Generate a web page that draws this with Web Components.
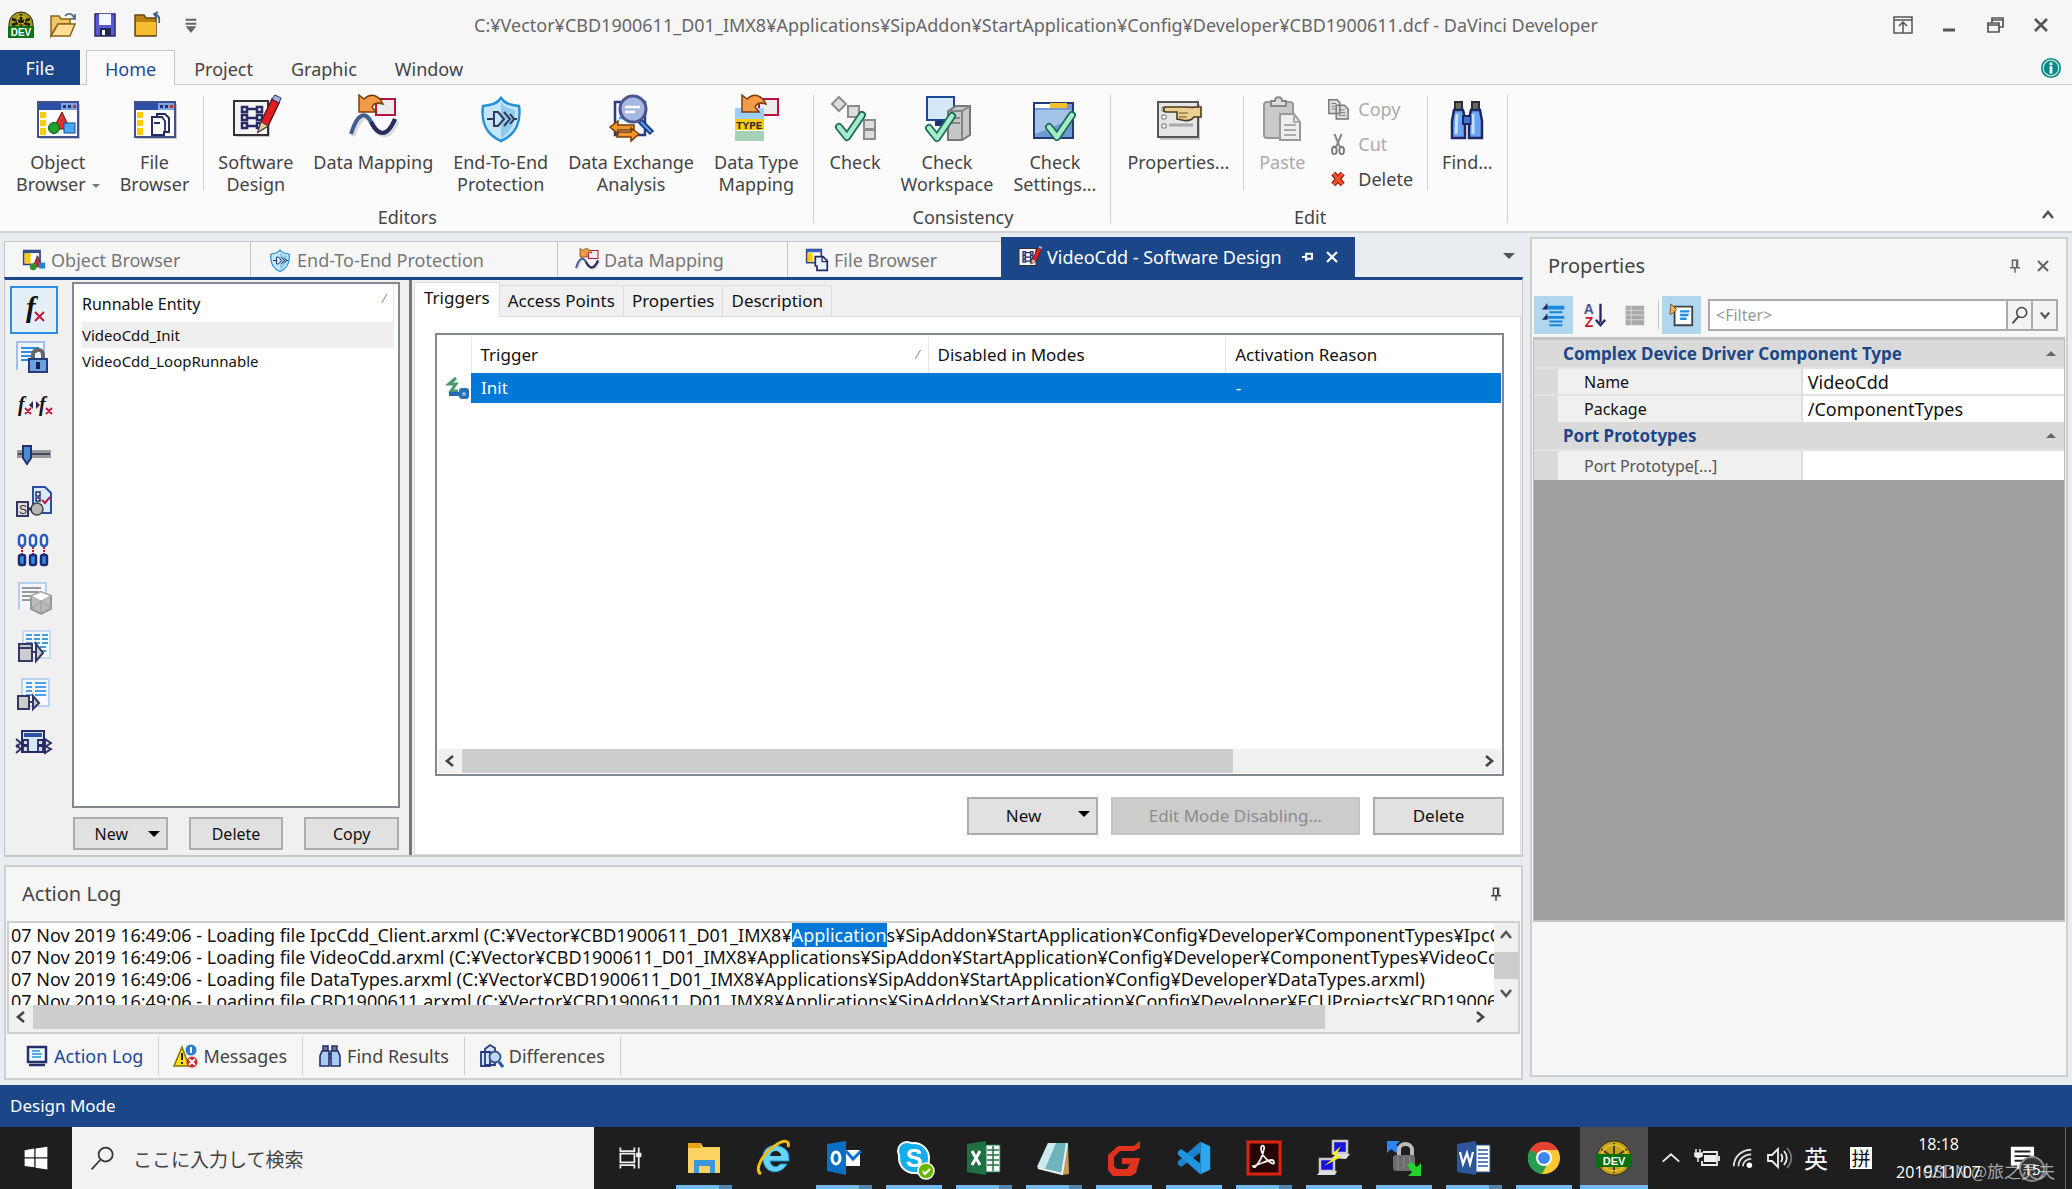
<!DOCTYPE html>
<html lang="en">
<head>
<meta charset="utf-8">
<title>DaVinci Developer</title>
<style>
    html, body {
        margin: 0;
        height: 100%;
    }
    body {
        font-family: "Noto Sans", "Open Sans", "Noto Sans CJK JP", sans-serif;
        font-size: 18px;
        line-height: 22px;
        color: #444;
        overflow: hidden;
    }
</style>
</head>
<body>
<app-window>
    <title-bar slot="top">C:¥Vector¥CBD1900611_D01_IMX8¥Applications¥SipAddon¥StartApplication¥Config¥Developer¥CBD1900611.dcf - DaVinci Developer</title-bar>
    <ribbon-tabs slot="top"></ribbon-tabs>
    <ribbon-bar slot="top">
        <ribbon-group label="Editors">
            <ribbon-button icon="objectBrowser" menu>Object<br>Browser</ribbon-button>
            <ribbon-button icon="fileBrowser">File<br>Browser</ribbon-button>
            <ribbon-separator></ribbon-separator>
            <ribbon-button icon="softwareDesign">Software<br>Design</ribbon-button>
            <ribbon-button icon="dataMapping">Data Mapping</ribbon-button>
            <ribbon-button icon="shield">End-To-End<br>Protection</ribbon-button>
            <ribbon-button icon="exchange">Data Exchange<br>Analysis</ribbon-button>
            <ribbon-button icon="typeMapping">Data Type<br>Mapping</ribbon-button>
        </ribbon-group>
        <ribbon-group label="Consistency">
            <ribbon-button icon="check">Check</ribbon-button>
            <ribbon-button icon="checkWorkspace">Check<br>Workspace</ribbon-button>
            <ribbon-button icon="checkSettings">Check<br>Settings...</ribbon-button>
        </ribbon-group>
        <ribbon-group label="Edit">
            <ribbon-button icon="properties">Properties...</ribbon-button>
            <ribbon-separator></ribbon-separator>
            <ribbon-button icon="paste" disabled>Paste</ribbon-button>
            <ribbon-stack>
                <small-button icon="copy" disabled>Copy</small-button>
                <small-button icon="cut" disabled>Cut</small-button>
                <small-button icon="delete">Delete</small-button>
            </ribbon-stack>
            <ribbon-separator></ribbon-separator>
            <ribbon-button icon="binoculars">Find...</ribbon-button>
        </ribbon-group>
    </ribbon-bar>
    <document-area slot="main">
        <document-tab slot="tabs" icon="objectSmall" style="flex-basis:246px">Object Browser</document-tab>
        <document-tab slot="tabs" icon="shield" style="flex-basis:307px">End-To-End Protection</document-tab>
        <document-tab slot="tabs" icon="dataMapping" style="flex-basis:230px">Data Mapping</document-tab>
        <document-tab slot="tabs" icon="fileSmall" style="flex-basis:214px">File Browser</document-tab>
        <document-tab slot="tabs" icon="softwareDesign" active style="flex-basis:354px">VideoCdd - Software Design</document-tab>
        <tool-strip></tool-strip>
        <entity-list></entity-list>
        <trigger-panel></trigger-panel>
    </document-area>
    <log-panel slot="main"></log-panel>
    <properties-panel slot="side"></properties-panel>
    <status-bar slot="bottom">Design Mode</status-bar>
    <task-bar slot="bottom"></task-bar>
</app-window>

<script>
const tick = (x, y) => `<path d="M${x} ${y + 14}l8 10 15-22" fill="none" stroke="#1c6b5a" stroke-width="8" stroke-linecap="round" stroke-linejoin="round"/><path d="M${x} ${y + 14}l8 10 15-22" fill="none" stroke="#a5ecc8" stroke-width="4.5" stroke-linecap="round" stroke-linejoin="round"/>`;
const windowFrame = `
    <rect x="6" y="10" width="40" height="35" fill="#0003"/>
    <rect x="4" y="8" width="40" height="35" fill="#fff" stroke="#41508f" stroke-width="2"/>
    <rect x="5" y="9" width="38" height="7" fill="#7ba4e0"/><rect x="5" y="9" width="22" height="7" fill="#2a4fa5"/>
    <path d="M29 11h3v3h-3zM34 11h3v3h-3z" fill="#28306e"/><path d="M39 11h3v3h-3z" fill="#d12a2a"/>
    <path d="M6 18h6v6H6zM6 26h6v6H6zM6 34h6v7H6z" fill="#ffcc00"/>`;
const arrowBack = (x, y) => `<path d="M${x} ${y}l5 4c6-6 14-5 19 5-6-2-9-1-11 3l4 5H${x}z" fill="#f29a45" stroke="#7c3f0c" stroke-width="1.5"/>`;
const ports = `<path d="M3 5h5v5H3zM3 13h5v5H3zM3 21h5v5H3zM18 5h5v5h-5zM18 13h5v5h-5zM18 21h5v5h-5zM8 7h10M8 16h10M8 24h10" fill="none" stroke="#272b66" stroke-width="2.5"/>`;

// [viewBox size, markup]
const ICONS = {
    objectBrowser: [48, `${windowFrame}<path d="M28 18l8 17H19z" fill="#d8342c" stroke="#6e1717"/><circle cx="20" cy="34" r="5.5" fill="#20a22b" stroke="#0d5c14"/><rect x="30" y="29" width="11" height="10" fill="#4aa8f5" stroke="#134a91"/>`],
    fileBrowser: [48, `${windowFrame}<path d="M21 23h5v-3h8l4 4v14h-5v3H21z" fill="#fff" stroke="#272b66" stroke-width="2"/><path d="M26 23h5l3 4v11M26 20v3M23 29h6" fill="none" stroke="#272b66" stroke-width="1.8"/>`],
    softwareDesign: [48, `<rect x="4" y="9" width="34" height="34" fill="#0003"/><rect x="2" y="7" width="34" height="34" fill="#f5f5f5" stroke="#333" stroke-width="2"/><g transform="translate(7 8)">${ports}</g><path d="M26 38l3-10 11-23 7 4-11 23z" fill="#e02020" stroke="#66131a" stroke-width="1.5"/><path d="M40 5l3-4 6 3-2 5z" fill="#a9b0dc" stroke="#272b66"/><path d="M26 38l3-10 7 4z" fill="#e8cfa0" stroke="#444"/>`],
    dataMapping: [48, `<rect x="27" y="5" width="19" height="16" fill="#ececec" stroke="#b8123f" stroke-width="2"/>${arrowBack(10, 1)}<path d="M2 40C8 20 16 16 22 28s15 18 24-3" fill="none" stroke="#0002" stroke-width="5" transform="translate(2 2)"/><path d="M2 40C8 20 16 16 22 28s15 18 24-3" fill="none" stroke="#3f5d91" stroke-width="4"/><path d="M22 28c6 12 15 18 24-3" fill="none" stroke="#292c5d" stroke-width="4"/>`],
    shield: [48, `<path d="M24 4c4 6 10 7 18 8 2 14-2 28-18 35C8 40 4 26 6 12c8-1 14-2 18-8z" fill="#c4e5fb" stroke="#2490d4" stroke-width="2.5"/><path d="M24 8c3 5 9 7 14 8 1 11-3 21-14 28z" fill="#91caef"/><path d="M10 25h7M17 18v14h4l6-7-6-7zM27 18l6 7-6 7M33 20l4 5-4 5M36 25h4" fill="none" stroke="#333a58" stroke-width="2"/>`],
    exchange: [48, `<path d="M8 8h30v33H8z" fill="#f1f8ff" stroke="#293a80" stroke-width="2.5"/><path d="M12 14h8M12 19h6M12 24h8" stroke="#3aa2ee" stroke-width="2.5"/><path d="M33 27l12 12" stroke="#183c8d" stroke-width="6"/><path d="M34 28l10 10" stroke="#5fa1ed" stroke-width="2"/><circle cx="26" cy="15" r="13" fill="#a6b8e4" stroke="#4b568c" stroke-width="3"/><path d="M18 13h15M18 18h10" stroke="#fff" stroke-width="2.5"/><path d="M3 33l8-6v4h16v5H11v4zM32 40l-8-6v4H10v5h14v4z" fill="#ef962e" stroke="#7b3e08" stroke-width="1.5"/>`],
    typeMapping: [48, `<rect x="27" y="5" width="19" height="16" fill="#ececec" stroke="#b8123f" stroke-width="2"/><path d="M3 14h29v11H3z" fill="#9cceff"/><path d="M3 25h29v11H3z" fill="#ffcb12"/><path d="M3 37h29v10H3z" fill="#a5d1b8"/>${arrowBack(10, 1)}<text x="4" y="35" font-family="Liberation Mono, monospace" font-weight="700" font-size="11" fill="#2b2a35">TYPE</text>`],
    check: [48, `<g fill="#ddd" stroke="#8c8c8c" stroke-width="2"><path d="M8 3l7 7-7 7-7-7z"/><path d="M17 12h11v11H17zM33 26h11v9H33zM33 36h11v9H33z"/></g>${tick(8, 19)}`],
    checkWorkspace: [48, `<rect x="4" y="3" width="27" height="23" fill="#d6e7f8" stroke="#1b4a93" stroke-width="2"/><path d="M12 27h14v5H12z" fill="#23326e"/><path d="M25 17l8-5h14v29l-8 5H25z" fill="#c7c7c7" stroke="#777" stroke-width="2"/><path d="M25 17h14l8-5M39 17v28M28 24h9M28 29h9" fill="none" stroke="#858585" stroke-width="2"/>${tick(6, 20)}`],
    checkSettings: [48, `<path d="M3 9h39v35H3z" fill="#6f9bd4" stroke="#233a77" stroke-width="2"/><path d="M4 10h15v4H4z" fill="#fff"/><path d="M19 9h17v5H19z" fill="#f7c229"/><path d="M4 16h37v9L4 40z" fill="#a3c3e9"/>${tick(18, 19)}`],
    properties: [48, `<path d="M6 10h40v36H6z" fill="#0003"/><path d="M4 8h40v35H4z" fill="#e6e6e6" stroke="#555" stroke-width="2"/><path d="M8 13h4v4H8zM8 21h4v4H8zM8 30h4v4H8z" fill="#fff" stroke="#777"/><path d="M15 31h24" stroke="#aaa" stroke-width="3"/><path d="M12 13h20c5 0 6 1 9 0h6v10h-7c-3 4-8 4-12 3l-5-1v-7H12c-3 0-3-5 0-5z" fill="#edcf91" stroke="#4a3a1b" stroke-width="1.6"/><path d="M25 19h9M25 23h8" stroke="#6b552a"/>`],
    paste: [48, `<rect x="6" y="8" width="29" height="36" rx="3" fill="#c9c9c9" stroke="#999" stroke-width="2"/><path d="M13 12V7h4c0-5 7-5 7 0h4v5z" fill="#ddd" stroke="#888" stroke-width="2"/><path d="M22 20h14l6 8v18H22z" fill="#eee" stroke="#999" stroke-width="2"/><path d="M36 20v8h6M26 31h12M26 36h12M26 41h12" fill="none" stroke="#aaa" stroke-width="2"/>`],
    binoculars: [48, `<path d="M12 8h7v8h-7zM29 8h7v8h-7z" fill="#6a6a58" stroke="#272b44" stroke-width="2"/><path d="M11 16h9l2 9v19H9V27zM28 16h9l2 11v17H26V25z" fill="#68a4ef" stroke="#1d2766" stroke-width="2.5"/><path d="M20 22h8v8h-8z" fill="#3d76cb" stroke="#1d2766" stroke-width="2"/><path d="M14 20l-1 20M30 20v20" stroke="#c6e1ff" stroke-width="3"/>`],
    copy: [24, `<path d="M2 2h9l3 3v12H2zM10 8h9l4 4v11H10z" fill="#ddd" stroke="#777" stroke-width="1.6"/><path d="M5 6h5M5 9h4M5 12h4M13 13h6M13 16h7M13 19h7" stroke="#777"/>`],
    cut: [24, `<path d="M8 1l6 14M16 1l-6 14" stroke="#888" stroke-width="2.2"/><ellipse cx="8" cy="19" rx="2.500" ry="4" fill="none" stroke="#777" stroke-width="2"/><ellipse cx="16" cy="19" rx="2.500" ry="4" fill="none" stroke="#777" stroke-width="2"/>`],
    delete: [24, `<path d="M7 6l10 12M17 6L7 18" stroke="#8b1b0c" stroke-width="6"/><path d="M7 6l10 12M17 6L7 18" stroke="#f0532b" stroke-width="3.5"/>`],

    dev: [28, `<path d="M2 24V13a12 12 0 0124 0v11z" fill="#a89a17" stroke="#222"/><path d="M14 3v12M5 8l18 6M23 8L5 14" stroke="#1c1c08" stroke-width="2.5"/><circle cx="14" cy="9" r="4" fill="none" stroke="#d4bf25"/><rect x="1" y="15" width="26" height="12" fill="#0a7319"/><text x="14" y="25" text-anchor="middle" font-family="Liberation Sans, sans-serif" font-weight="700" font-size="10" fill="#fff">DEV</text>`],
    open: [28, `<path d="M2 25V5h8l2 3h9v5H9z" fill="#f0c568" stroke="#8a6417" stroke-width="1.5"/><path d="M2 25l7-12h17l-5 12z" fill="#ffdf97" stroke="#8a6417" stroke-width="1.5"/><path d="M16 5c4-4 8-2 9 2M26 3v5h-5" fill="none" stroke="#47657d" stroke-width="1.6"/>`],
    save: [28, `<path d="M4 3h20v22H4z" fill="#5a5ad0" stroke="#272870" stroke-width="1.5"/><path d="M8 3h12v11H8z" fill="#f2f6ff"/><path d="M9 17h11v8H9z" fill="#25264e"/><path d="M11 19h3v5h-3z" fill="#fff"/>`],
    folder: [28, `<path d="M2 25V4h9l2 3h10v18z" fill="#b98315" stroke="#6b470b" stroke-width="1.5"/><path d="M3 11h20v13H3z" fill="#f6bd2e"/><path d="M26 12c1-5 0-8-4-9M25 1l-4 2 3 4" fill="none" stroke="#345b85" stroke-width="1.7"/>`],
    overflow: [24, `<path d="M8 8h8M8 11h8" stroke="#666" stroke-width="1.5"/><path d="M8 13h8l-4 5z" fill="#666"/>`],
    ribbonToggle: [24, `<path d="M3 4h18v16H3zM3 7h18M12 20V10M8 13l4-4 4 4" fill="none" stroke="#555" stroke-width="1.5"/>`],
    minimize: [24, `<path d="M6 17h12" stroke="#555" stroke-width="3"/>`],
    restore: [24, `<path d="M5 10h11v9H5zM5 12h11M9 10V5h11v9h-4M9 7h11" fill="none" stroke="#555" stroke-width="1.7"/>`],
    close: [24, `<path d="M6 6l12 12M18 6L6 18" stroke="currentColor" stroke-width="2.6"/>`],
    info: [24, `<circle cx="12" cy="12" r="11" fill="#0b8a8a"/><circle cx="12" cy="12" r="8.500" fill="none" stroke="#bfe6e4" stroke-width="1.3"/><path d="M12 10v8M12 6v3" stroke="#fff" stroke-width="3"/>`],
    chevronUp: [24, `<path d="M7 15l5-6 5 6" fill="none" stroke="#555" stroke-width="2.6"/>`],
    pin: [24, `<path d="M8 5h8M9 5v9M14 5v9M15 5v9M6 14h12M12 14v6" fill="none" stroke="currentColor" stroke-width="1.8"/>`],
    pinSide: [24, `<path d="M6 12h5M11 7v10M11 8h7v6h-7M11 14h7" fill="none" stroke="currentColor" stroke-width="2.400"/>`],
    objectSmall: [28, `<path d="M2 3h19v16H2z" fill="#fff" stroke="#34427f" stroke-width="2"/><path d="M3 6h7v12H3z" fill="#ffcc00"/><path d="M2 3h19v3H2z" fill="#35518f"/><path d="M18 9l6 13H13z" fill="#b63434" stroke="#44204a"/><circle cx="13" cy="22" r="4" fill="#259827"/><path d="M20 17h7v7h-7z" fill="#2386d8"/>`],
    fileSmall: [28, `<path d="M2 2h17v15H2z" fill="#fff" stroke="#34427f" stroke-width="2"/><path d="M3 6h6v10H3z" fill="#ffcc00"/><path d="M2 2h17v3H2z" fill="#3b66bd"/><path d="M12 10h9l5 5v11H14v-5h-2z" fill="#e9f2ff" stroke="#272b66" stroke-width="2"/><path d="M20 10v6h6" fill="none" stroke="#272b66" stroke-width="1.500"/>`],

    fx: [36, `<text x="10" y="25" font-family="Liberation Serif, serif" font-style="italic" font-weight="700" font-size="29" fill="#111">f</text><path d="M19 20l9 9M28 20l-9 9" stroke="#c2163c" stroke-width="2"/>`],
    lockDoc: [36, `<path d="M1 30V2h27v14" fill="#eef5fd" stroke="#9fc0ec" stroke-width="2"/><path d="M5 8h18M5 12h16M5 16h10M5 20h8" stroke="#2892da" stroke-width="2"/><path d="M17 19v-4c0-7 10-7 10 0v4" fill="none" stroke="#666" stroke-width="4"/><path d="M13 19h18v13H13z" fill="#6ba0df" stroke="#253c78" stroke-width="2"/><path d="M22 22v7" stroke="#1b1f4f" stroke-width="4"/>`],
    fxfx: [36, `<g font-family="Liberation Serif, serif" font-style="italic" font-weight="700" font-size="20" fill="#111"><text x="2" y="23">f</text><text x="23" y="23">f</text></g><path d="M9 20l6 6M15 20l-6 6M30 20l6 6M36 20l-6 6" stroke="#c2163c" stroke-width="1.8"/><path d="M17 13v8l-4-4zM20 13v8l4-4z" fill="#272b66"/>`],
    slider: [36, `<path d="M1 18h34" stroke="#999" stroke-width="8"/><path d="M2 18h32" stroke="#444a66" stroke-width="2"/><path d="M7 10h8v12l-4 6-4-6z" fill="#4a8ad6" stroke="#23306b" stroke-width="2"/>`],
    service: [36, `<path d="M17 3h12l6 6v20H17z" fill="#dcebfb" stroke="#2b4f9f" stroke-width="2"/><path d="M20 8h4v4h-4zM20 14h4v3h-4z" fill="#fff" stroke="#272b66" stroke-width="1.5"/><path d="M26 16l3 3 5-6" fill="none" stroke="#c2163c" stroke-width="2"/><path d="M1 18h11v14H1z" fill="#ddd" stroke="#333763" stroke-width="2"/><text x="3" y="30" font-family="Liberation Sans, sans-serif" font-size="12" fill="#333">S</text><circle cx="21" cy="25" r="6" fill="#b5b5b5" stroke="#444" stroke-width="1.5"/><path d="M12 25h4" stroke="#272b66" stroke-width="3"/>`],
    pipes: [36, `<g fill="#fff" stroke="#2b5bbd" stroke-width="2.500"><rect x="3" y="3" width="6" height="11" rx="3"/><rect x="14" y="3" width="6" height="11" rx="3"/><rect x="25" y="3" width="6" height="11" rx="3"/></g><path d="M6 15v7M17 15v7M28 15v7" stroke="#c2163c" stroke-width="2" stroke-dasharray="2 1"/><g fill="#3a8ae2" stroke="#192d76" stroke-width="2.500"><rect x="3" y="23" width="6" height="10" rx="2"/><rect x="14" y="23" width="6" height="10" rx="2"/><rect x="25" y="23" width="6" height="10" rx="2"/></g>`],
    packageDoc: [36, `<path d="M3 30V3h27v20" fill="#f3f7fc" stroke="#b6cfee" stroke-width="2"/><path d="M6 8h19M6 12h17M6 16h10M6 20h8" stroke="#999" stroke-width="2"/><path d="M15 16l10-4 10 4v13l-10 5-10-5z" fill="#bbb" stroke="#999" stroke-width="2"/><path d="M15 16l10 5 10-5-10-4z" fill="#fff" stroke="#aaa"/><path d="M25 21v12M15 29l10-8 10 8" fill="none" stroke="#999"/>`],
    tableArrow: [36, `<path d="M7 3h27v27H7z" fill="#f6faff" stroke="#c6daf2" stroke-width="2"/><path d="M10 7h22M10 11h22M10 15h22M24 19h8M24 23h8" stroke="#3f9ddc" stroke-width="2" stroke-dasharray="6 2"/><path d="M3 16h13v17H3zM3 20h13M16 24h4M20 16v17l7-8z" fill="#ccc" stroke="#333763" stroke-width="2"/>`],
    tablePort: [36, `<path d="M6 3h27v27H6z" fill="#f6faff" stroke="#b9d2f0" stroke-width="2"/><path d="M10 7h20M10 11h20M10 15h20M10 19h20" stroke="#4aa1e8" stroke-width="2" stroke-dasharray="6 3 12"/><path d="M2 20h11v13H2zM13 26h4M17 20v13l6-6z" fill="#ccc" stroke="#333763" stroke-width="2"/>`],
    composition: [36, `<path d="M6 7h22v21H6z" fill="#d6e9fc" stroke="#272b66" stroke-width="2"/><path d="M8 11h18" stroke="#2952a8" stroke-width="4"/><path d="M7 16h5v5H7zM7 22h5v6H7zM22 16h5v5h-5zM22 22h5v6h-5zM0 15l5 4-5 4M0 21l5 4-5 4M29 15l6 4-6 4zM29 22l6 3-6 4z" fill="#d9d9d9" stroke="#272b66" stroke-width="1.8"/>`],
    trigger: [24, `<path d="M10 2L3 8h7l-5 7h7" fill="none" stroke="#4d976d" stroke-width="3"/><path d="M3 18h12" stroke="#2469b1" stroke-width="4"/><rect x="13" y="12" width="10" height="11" rx="3" fill="#2e6eb5"/><circle cx="18" cy="18" r="2" fill="#8cb9e8"/>`],

    categorize: [28, `<path d="M7 4h18v4H7zM7 15h18v3H7z" fill="#1787e0"/><path d="M9 11h14M9 21h14M9 25h14" stroke="#1587df" stroke-width="2"/><path d="M7 1v7H1zM7 12v7H1z" fill="#232b5f"/>`],
    sortAz: [28, `<text x="3" y="13" font-family="Liberation Sans, sans-serif" font-weight="700" font-size="15" fill="#49528b">A</text><text x="4" y="27" font-family="Liberation Sans, sans-serif" font-weight="700" font-size="15" fill="#d0142e">Z</text><path d="M21 2v20M16 19l5 6 5-6" fill="none" stroke="#252b69" stroke-width="2.500"/>`],
    gridGray: [28, `<path d="M5 4h20v21H5z" fill="#aaa"/><path d="M11 4v21M5 9h20M5 14h20M5 19h20" stroke="#ccc" stroke-width="1.500"/>`],
    description: [28, `<path d="M6 5h19v20H6z" fill="#fff" stroke="#444" stroke-width="2"/><path d="M12 10h10M12 14h9M12 18h7" stroke="#1d8ae0" stroke-width="2.500"/><path d="M2 2l6 6-5 5H1z" fill="#f2b34e" stroke="#7c501a"/>`],
    search: [24, `<circle cx="14" cy="9" r="6" fill="none" stroke="#444" stroke-width="1.8"/><path d="M10 14l-7 8" stroke="#444" stroke-width="2.200"/>`],
    chevronDown: [24, `<path d="M7 9l5 6 5-6" fill="none" stroke="#555" stroke-width="2.600"/>`],
    chevronLeft: [24, `<path d="M15 7l-6 5 6 5" fill="none" stroke="#444" stroke-width="2.600"/>`],
    chevronRight: [24, `<path d="M9 7l6 5-6 5" fill="none" stroke="#444" stroke-width="2.600"/>`],

    logSmall: [24, `<path d="M3 3h18v15H3z" fill="#eef7ff" stroke="#23306b" stroke-width="2.500"/><path d="M7 7h8M7 10h10M7 13h9" stroke="#2693dc" stroke-width="1.600"/><path d="M4 21h16" stroke="#23306b" stroke-width="2.500"/>`],
    messages: [24, `<path d="M8 3l7 19H0z" fill="#ffdf1b" stroke="#897500" stroke-width="1.500"/><path d="M8 9v7M8 18v2" stroke="#222" stroke-width="2"/><circle cx="17" cy="6" r="5.500" fill="#2a7fce"/><path d="M17 3v6" stroke="#fff" stroke-width="2"/><circle cx="18" cy="18" r="5.500" fill="#cf2a2a"/><path d="M15 15l6 6M21 15l-6 6" stroke="#fff" stroke-width="1.800"/>`],
    binocularsSmall: [24, `<path d="M5 2h5v5H5zM14 2h5v5h-5z" fill="#68729b" stroke="#23306b" stroke-width="1.500"/><path d="M4 7h7v15H2V12zM13 7h7l2 5v10h-9zM11 10h2v4h-2z" fill="#a8c9f0" stroke="#23306b" stroke-width="1.600"/>`],
    diff: [24, `<path d="M1 8h9v14H1zM5 5l5-4 5 3v17H5z" fill="#d4e5f8" stroke="#293a80" stroke-width="1.800"/><circle cx="15" cy="13" r="5.500" fill="#bfd8f5" stroke="#3a4c8b" stroke-width="1.800"/><path d="M19 18l4 5" stroke="#2356ad" stroke-width="3"/>`],

    windows: [32, `<path d="M3 7l11-2v10H3zM15.500 5L29 3v12H15.500zM3 16.500h11v10L3 25zM15.500 16.500H29V29l-13.500-2z" fill="#fff"/>`],
    searchBig: [32, `<circle cx="19" cy="12" r="8" fill="none" stroke="#333" stroke-width="2"/><path d="M13 18L3 29" stroke="#333" stroke-width="2"/>`],
    taskView: [32, `<path d="M5 4v4h16V4M5 28v-4h16v4M5 11h16v10H5z" fill="none" stroke="#eee" stroke-width="2"/><path d="M26 4v24" stroke="#eee" stroke-width="2"/><path d="M23 10h6v5h-6z" fill="#eee"/>`],
    explorer: [36, `<path d="M2 3h13l2 4h17v26H2z" fill="#fcd363"/><path d="M2 3h13v5H2z" fill="#e8a317"/><path d="M8 33V20h21v13h-5v-7H13v7z" fill="#3a97de"/>`],
    ie: [36, `<path d="M31 24C25 35 9 35 7 20S22 1 31 11c2 3 2 6 2 10H14c1 7 8 7 10 3z" fill="#67d3f7" stroke="#1d90cc"/><path d="M14 16h11c0-6-10-7-11 0z" fill="#1e1e1e"/><path d="M5 34C-3 30 8 12 20 5c9-6 14-4 12 2" fill="none" stroke="#f0bd17" stroke-width="3"/>`],
    outlook: [36, `<path d="M1 4l19-3v34L1 31z" fill="#0a70c5"/><path d="M20 10h14v16H20z" fill="#fff"/><path d="M20 11l7 8 8-8" fill="none" stroke="#0a70c5" stroke-width="3"/><ellipse cx="10" cy="18" rx="4" ry="6" fill="none" stroke="#fff" stroke-width="3"/>`],
    skype: [36, `<circle cx="11" cy="11" r="10" fill="#fff"/><circle cx="24" cy="25" r="10" fill="#fff"/><circle cx="18" cy="18" r="16" fill="#fff"/><circle cx="11" cy="11" r="8" fill="#11aeea"/><circle cx="24" cy="25" r="8" fill="#11aeea"/><circle cx="18" cy="18" r="14" fill="#11aeea"/><text x="18" y="27" text-anchor="middle" font-family="Liberation Sans, sans-serif" font-weight="700" font-size="25" fill="#fff">S</text><circle cx="30" cy="31" r="8" fill="#6bb700" stroke="#fff" stroke-width="1.500"/><path d="M27 31l2 3 5-5" fill="none" stroke="#fff" stroke-width="2"/>`],
    excel: [36, `<path d="M20 5h14v27H20z" fill="#fff" stroke="#1f7144"/><path d="M21 10h12M21 15h12M21 20h12M21 25h12M27 6v25" stroke="#1f7144" stroke-width="1.500"/><path d="M1 4l19-3v34L1 32z" fill="#1f7144"/><path d="M6 11l8 14M14 11L6 25" stroke="#fff" stroke-width="3"/>`],
    notepad: [36, `<path d="M12 3l20 1 1 30-8 1z" fill="#c89b54"/><path d="M12 3h19l-5 31-25-7z" fill="#6eb4bd"/><path d="M12 3h8L9 29l-8-2z" fill="#cfe8ee"/><path d="M2 28l24 6 5-31" fill="none" stroke="#e8f2f4" stroke-width="2"/>`],
    gRed: [36, `<path d="M34 1v7l-6 3H14l-6 6v9l3 3h10l3-5h-8v-6h18l-4 15-5 3H7l-5-6V15L12 6h16z" fill="#df321f"/>`],
    vscode: [40, `<path d="M27 2l11 5v26l-11 5z" fill="#2ba6ef"/><path d="M27 2v12L6 30l-4-3v-3z" fill="#1b83cb"/><path d="M27 38V26L6 10l-4 3v3z" fill="#1f95df"/>`],
    acrobat: [36, `<path d="M2 2h32v32H2z" fill="#280505" stroke="#dc2310" stroke-width="3"/><path d="M8 26c14-5 20-9 20-3 0 3-12-5-13-14 0-5 4-4 3 0-1 5-4 13-9 18-3 0-2-1-1-1z" fill="none" stroke="#eee" stroke-width="1.800"/>`],
    putty: [36, `<path d="M17 1h14v12H17zM4 19h14v12H4z" fill="#1513da" stroke="#ccc" stroke-width="2.500"/><path d="M16 18l4-4h14l-4 5zM1 35l3-4h17l-2 4z" fill="#ddd"/><path d="M25 6l-9 8 4 2-12 10 17-9-5-2z" fill="#f4ef1a"/>`],
    lock: [36, `<path d="M1 1h13l-4 4 5 4-5 4-5-4-4 4z" fill="#2b86f2"/><path d="M13 16v-6c0-8 13-8 13 0v6" fill="none" stroke="#bbb" stroke-width="4"/><rect x="7" y="15" width="22" height="16" rx="3" fill="#6d6d6d"/><path d="M12 17v12M18 17v12M24 17v12" stroke="#8e8e8e"/><path d="M21 25l5-3 5 5 4-4v13H22l4-4z" fill="#22d32b"/>`],
    word: [36, `<path d="M20 5h14v27H20z" fill="#fff" stroke="#2b579a"/><path d="M22 10h10M22 14h10M22 18h10M22 22h10M22 26h10" stroke="#2b579a" stroke-width="1.500"/><path d="M1 4l19-3v34L1 32z" fill="#2b579a"/><path d="M4 12l3 12 4-11 3 11 3-12" fill="none" stroke="#fff" stroke-width="2.200"/>`],
    chrome: [36, `<circle cx="18" cy="18" r="16" fill="#fcc934"/><path d="M18 18L4 10a16 16 0 0128 0H18z" fill="#e54135"/><path d="M4 10a16 16 0 0012 24l7-13-5-3z" fill="#269c51"/><path d="M4 10l8 13 6-5z" fill="#269c51"/><circle cx="18" cy="18" r="8" fill="#fff"/><circle cx="18" cy="18" r="6" fill="#4285f4"/>`],
    devCoin: [36, `<circle cx="18" cy="18" r="17" fill="#c9a21c" stroke="#332d0c"/><path d="M18 3v30M5 9l26 18M31 9L5 27" stroke="#4a3c09" stroke-width="2"/><circle cx="18" cy="18" r="13" fill="none" stroke="#e2c53b" stroke-width="1.500"/><path d="M0 14h36v13H0z" fill="#08700e"/><text x="18" y="25" text-anchor="middle" font-family="Liberation Sans, sans-serif" font-weight="700" font-size="11" fill="#fff">DEV</text>`],
    trayUp: [24, `<path d="M3 16l9-8 9 8" fill="none" stroke="#eee" stroke-width="2"/>`],
    battery: [26, `<path d="M10 10h12v7H10z" fill="#eee"/><path d="M9 7h14v13H8v-4M25 11v5" fill="none" stroke="#eee" stroke-width="1.800"/><path d="M2 4v3M6 4v3M1 8h7v3l-4 2-3-2zM4 13v4" fill="#eee" stroke="#eee" stroke-width="1.500"/>`],
    wifi: [24, `<g fill="none" stroke="#ddd" stroke-width="2"><path d="M2 21C2 10 11 3 21 3"/><path d="M7 21c0-8 7-13 14-13M12 21c0-5 4-8 9-8"/></g><circle cx="19" cy="20" r="3" fill="#fff"/>`],
    sound: [26, `<path d="M2 10h4l6-6v18l-6-6H2z" fill="none" stroke="#eee" stroke-width="1.800"/><path d="M15 9c2 3 2 5 0 8M18 6c4 5 4 9 0 14" fill="none" stroke="#eee" stroke-width="1.800"/><path d="M21 3c6 7 6 13 0 20" fill="none" stroke="#777" stroke-width="1.800"/>`],
    notification: [28, `<path d="M2 2h25v20H14l-5 5v-5H2z" fill="#fff"/><path d="M6 7h17M6 12h17M6 17h12" stroke="#1e1e1e" stroke-width="2"/>`]
};

const BASE = `
    :host, *, *::before, *::after { box-sizing: border-box; }
    button { font: inherit; color: inherit; background: none; border: 0; padding: 0; margin: 0; cursor: default; }
    button, .row { display: flex; align-items: center; justify-content: center; }
`;

class BaseElement extends HTMLElement {
    constructor() {
        super();
        this.attachShadow({ mode: 'open' });
    }
    connectedCallback() {
        const template = document.createElement('template');
        template.innerHTML = `<style>${BASE}${this.css()}</style>${this.html()}`;
        this.shadowRoot.replaceChildren(template.content.cloneNode(true));
    }
    css() { return ''; }
    html() { return '<slot></slot>'; }
}

class UiIcon extends BaseElement {
    css() {
        const size = this.getAttribute('size') || 24;
        return `:host { display: block; flex: none; width: ${size}px; height: ${size}px; } svg { display: block; width: 100%; height: 100%; overflow: visible; }`;
    }
    html() {
        const [box, markup] = ICONS[this.getAttribute('name')];
        return `<svg viewBox="0 0 ${box} ${box}" aria-hidden="true">${markup}</svg>`;
    }
}
customElements.define('ui-icon', UiIcon);

class AppWindow extends BaseElement {
    css() {
        return `
            :host { display: flex; flex-direction: column; height: 100vh; background: #e9edf2; }
            .workspace { flex: 1; min-height: 0; display: flex; gap: 7px; padding: 4px 4px 5px; }
            main { flex: 1; min-width: 0; display: flex; flex-direction: column; gap: 8px; }
            aside { flex: 0 0 538px; display: flex; }
        `;
    }
    html() {
        return `<slot name="top"></slot>
            <div class="workspace">
                <main><slot name="main"></slot></main>
                <aside><slot name="side"></slot></aside>
            </div>
            <slot name="bottom"></slot>`;
    }
}
customElements.define('app-window', AppWindow);

class TitleBar extends BaseElement {
    css() {
        return `
            :host { display: grid; grid-template-columns: 1fr auto 1fr; align-items: center; height: 50px; background: #f6f6f6; color: #666; }
            .row { justify-content: flex-start; }
            .tools { gap: 14px; padding-left: 7px; }
            .window { gap: 22px; justify-content: flex-end; padding-right: 19px; color: #555; }
        `;
    }
    html() {
        const button = (name, label, size) => `<button aria-label="${label}"><ui-icon name="${name}" size="${size}"></ui-icon></button>`;
        return `<div class="row tools">
                ${button('dev', 'Application menu', 28)}${button('open', 'Open', 28)}${button('save', 'Save', 28)}${button('folder', 'Close workspace', 28)}
                ${button('overflow', 'Customize', 32)}
            </div>
            <span><slot></slot></span>
            <div class="row window">
                ${button('ribbonToggle', 'Ribbon options', 24)}${button('minimize', 'Minimize', 24)}${button('restore', 'Restore', 24)}${button('close', 'Close', 24)}
            </div>`;
    }
}
customElements.define('title-bar', TitleBar);

class RibbonTabs extends BaseElement {
    css() {
        return `
            :host { display: flex; height: 35px; background: linear-gradient(#c9c9c9, #c9c9c9) bottom / 100% 1px no-repeat #f6f6f6; }
            button { padding: 2px 19px 0; }
            .file { width: 80px; margin-right: 6px; padding: 0; background: #1b4788; color: #fff; }
            .active { background: #fbfbfb; color: #1b4a96; border: 1px solid #c9c9c9; border-bottom: 0; padding: 2px 18px 0; }
            ui-icon { margin-left: auto; margin-right: 10px; align-self: center; }
        `;
    }
    html() {
        return `<button class="file">File</button><button class="active">Home</button><button>Project</button><button>Graphic</button><button>Window</button><ui-icon name="info" size="22"></ui-icon>`;
    }
}
customElements.define('ribbon-tabs', RibbonTabs);

class RibbonBar extends BaseElement {
    css() {
        return `
            :host { display: flex; height: 148px; background: #fbfbfb; border-bottom: 2px solid #d0d2d4; }
            button { margin: auto 12px 4px auto; }
        `;
    }
    html() {
        return `<slot></slot><button aria-label="Collapse the ribbon"><ui-icon name="chevronUp"></ui-icon></button>`;
    }
}
customElements.define('ribbon-bar', RibbonBar);

class RibbonGroup extends BaseElement {
    css() {
        return `
            :host { display: flex; flex-direction: column; padding: 9px 5px 0 6px; background: linear-gradient(#d0d0d0, #d0d0d0) right 10px / 1px 128px no-repeat; }
            .items { display: flex; height: 112px; }
            .label { text-align: center; }
        `;
    }
    html() {
        return `<div class="items"><slot></slot></div><div class="label">${this.getAttribute('label')}</div>`;
    }
}
customElements.define('ribbon-group', RibbonGroup);

class RibbonSeparator extends BaseElement {
    css() {
        return `:host { display: block; width: 1px; height: 94px; margin: 2px 4px 0; background: #d0d0d0; }`;
    }
    html() { return ''; }
}
customElements.define('ribbon-separator', RibbonSeparator);

class RibbonButton extends BaseElement {
    css() {
        return `
            :host { display: block; }
            button { flex-direction: column; justify-content: flex-start; gap: 9px; padding: 0 10px; white-space: nowrap; }
            button:disabled { color: #aaa; }
            i { display: inline-block; margin-left: 6px; vertical-align: middle; border: 4px solid transparent; border-top-color: #777; border-bottom: 0; }
        `;
    }
    html() {
        return `<button ${this.hasAttribute('disabled') ? 'disabled' : ''}>
            <ui-icon name="${this.getAttribute('icon')}" size="48"></ui-icon>
            <span><slot></slot>${this.hasAttribute('menu') ? '<i></i>' : ''}</span>
        </button>`;
    }
}
customElements.define('ribbon-button', RibbonButton);

class RibbonStack extends BaseElement {
    css() {
        return `:host { display: flex; flex-direction: column; gap: 13px; padding: 4px 10px 0 11px; }`;
    }
}
customElements.define('ribbon-stack', RibbonStack);

class SmallButton extends BaseElement {
    css() {
        return `:host { display: block; } button { gap: 9px; height: 22px; } button:disabled { color: #aaa; }`;
    }
    html() {
        return `<button ${this.hasAttribute('disabled') ? 'disabled' : ''}><ui-icon name="${this.getAttribute('icon')}" size="22"></ui-icon><slot></slot></button>`;
    }
}
customElements.define('small-button', SmallButton);

class DocumentArea extends BaseElement {
    css() {
        return `
            :host { flex: 1; min-height: 0; display: flex; flex-direction: column; }
            nav { display: flex; align-items: flex-end; height: 40px; }
            nav button { margin: 0 8px 18px auto; }
            i { border: 6px solid transparent; border-top-color: #555; border-bottom: 0; }
            .body { flex: 1; min-height: 0; display: flex; background: #f0f0f0; border: 1px solid #c6c6c6; border-bottom-width: 2px; border-top: 3px solid #1b4788; }
        `;
    }
    html() {
        return `<nav><slot name="tabs"></slot><button aria-label="Open documents"><i></i></button></nav><div class="body"><slot></slot></div>`;
    }
}
customElements.define('document-area', DocumentArea);

class DocumentTab extends BaseElement {
    css() {
        return `
            :host { flex: 0 1 auto; display: block; height: 36px; min-width: 0; background: #f6f6f6; border: 1px solid #c6c6c6; border-width: 1px 0 0 1px; color: #777; }
            :host([active]) { height: 40px; background: #1b4788; border: 0; color: #fff; }
            .row { height: 100%; justify-content: flex-start; gap: 5px; padding-left: 17px; white-space: nowrap; }
            .pin { margin-left: 10px; }
        `;
    }
    html() {
        const tools = this.hasAttribute('active')
            ? `<button class="pin" aria-label="Pin"><ui-icon name="pinSide" size="20"></ui-icon></button><button aria-label="Close"><ui-icon name="close" size="20"></ui-icon></button>`
            : '';
        return `<div class="row"><button class="row" style="padding:0"><ui-icon name="${this.getAttribute('icon')}" size="24"></ui-icon><slot></slot></button>${tools}</div>`;
    }
}
customElements.define('document-tab', DocumentTab);

class ToolStrip extends BaseElement {
    css() {
        return `
            :host { display: flex; flex-direction: column; flex: none; width: 67px; padding: 6px 0 0 5px; }
            button { width: 48px; height: 48px; }
            .active { background: #e5eff8; border: 2px solid #2a8de6; }
        `;
    }
    html() {
        const tools = { fx: 'Runnables', lockDoc: 'Exclusive areas', fxfx: 'Inter-runnable variables', slider: 'Calibration', service: 'Service needs', pipes: 'Port groups', packageDoc: 'Per-instance memory', tableArrow: 'Port mapping', tablePort: 'Port access', composition: 'Composition' };
        return Object.keys(tools).map((name, i) => `<button class="${i ? '' : 'active'}" aria-label="${tools[name]}"><ui-icon name="${name}" size="36"></ui-icon></button>`).join('');
    }
}
customElements.define('tool-strip', ToolStrip);

class PushButton extends BaseElement {
    css() {
        return `
            :host { display: block; height: 33px; }
            button { position: relative; width: 100%; height: 100%; background: #e1e1e1; border: 2px solid #adadad; color: #111; }
            button:disabled { background: #ccc; border-color: #c4c4c4; color: #8c8c8c; }
            .menu span { margin-right: 18px; }
            i { position: absolute; right: 6px; top: 12px; border: 6px solid transparent; border-top-color: #000; border-bottom: 0; }
        `;
    }
    html() {
        const menu = this.hasAttribute('menu');
        return `<button class="${menu ? 'menu' : ''}" ${this.hasAttribute('disabled') ? 'disabled' : ''}><span><slot></slot></span>${menu ? '<i></i>' : ''}</button>`;
    }
}
customElements.define('push-button', PushButton);

class ScrollBar extends BaseElement {
    css() {
        return `
            :host { display: flex; height: 24px; background: #f0f0f0; }
            :host([vertical]) { flex-direction: column; width: 24px; height: auto; }
            .track { flex: 1; display: flex; }
            :host([vertical]) .track { flex-direction: column; }
            .thumb { background: #cdcdcd; flex: 0 0 ${this.getAttribute('thumb')}; }
            .before { flex: 0 0 ${this.getAttribute('start') || '0px'}; }
        `;
    }
    html() {
        const [a, b] = this.hasAttribute('vertical') ? ['chevronUp', 'chevronDown'] : ['chevronLeft', 'chevronRight'];
        return `<button aria-label="Scroll back"><ui-icon name="${a}"></ui-icon></button>
            <div class="track"><div class="before"></div><div class="thumb"></div></div>
            <button aria-label="Scroll forward"><ui-icon name="${b}"></ui-icon></button>`;
    }
}
customElements.define('scroll-bar', ScrollBar);

class EntityList extends BaseElement {
    css() {
        return `
            :host { flex: 0 0 328px; display: flex; flex-direction: column; padding-top: 2px; font-size: 16px; color: #111; }
            .box { flex: 1; background: #fff; border: 2px solid #828790; padding: 0 4px 0 8px; }
            .head { display: flex; justify-content: space-between; height: 38px; padding: 9px 8px 0 0; border-right: 1px solid #e5e5e5; }
            .head span:last-child { font-size: 12px; line-height: 12px; color: #777; }
            ul { list-style: none; margin: 0; padding: 0; }
            li { height: 26px; line-height: 26px; font-size: 15px; }
            li.selected { background: #efefef; }
            footer { display: flex; justify-content: space-between; padding: 9px 1px 5px; }
            push-button { flex: 0 0 29%; }
        `;
    }
    html() {
        return `<div class="box">
                <div class="head"><span>Runnable Entity</span><span>⁄</span></div>
                <ul><li class="selected">VideoCdd_Init</li><li>VideoCdd_LoopRunnable</li></ul>
            </div>
            <footer><push-button menu>New</push-button><push-button>Delete</push-button><push-button>Copy</push-button></footer>`;
    }
}
customElements.define('entity-list', EntityList);

class TriggerPanel extends BaseElement {
    css() {
        return `
            :host { flex: 1; min-width: 0; display: flex; flex-direction: column; margin-left: 9px; border-left: 3px solid #777; padding: 2px 1px 0 2px; color: #111; font-size: 17px; }
            nav { display: flex; align-items: flex-end; height: 35px; }
            nav button { height: 32px; padding: 0 8px; background: #f0f0f0; border: 1px solid #dcdcdc; border-left: 0; }
            nav button.active { height: 35px; background: #fff; border-bottom: 0; padding: 0 9px 4px; border-left: 1px solid #dcdcdc; z-index: 1; }
            .page { flex: 1; display: flex; flex-direction: column; margin-top: -1px; background: #fff; border: 1px solid #dcdcdc; padding: 16px 16px 19px 20px; }
            .box { flex: 1; display: flex; flex-direction: column; border: 2px solid #828790; padding: 2px 1px 1px; }
            table { border-collapse: collapse; width: 100%; table-layout: fixed; }
            th { height: 36px; font-weight: 400; text-align: left; padding: 0 9px; border-left: 1px solid #e5e5e5; }
            th:first-child, td:first-child { border: 0; padding: 0 0 0 8px; background: #fff; }
            th .row { justify-content: space-between; }
            small { color: #777; font-size: 12px; }
            td { height: 30px; padding: 0 10px; background: #0078d7; color: #fff; }
            scroll-bar { margin-top: auto; }
            footer { display: flex; justify-content: flex-end; gap: 13px; padding-top: 21px; }
            push-button { height: 38px; width: 131px; }
            .wide { width: 249px; }
        `;
    }
    html() {
        return `<nav><button class="active">Triggers</button><button>Access Points</button><button>Properties</button><button>Description</button></nav>
            <div class="page">
                <div class="box">
                    <table>
                        <colgroup><col style="width:33px"><col style="width:43%"><col style="width:28%"><col></colgroup>
                        <thead><tr><th></th><th><div class="row">Trigger<small>⁄</small></div></th><th>Disabled in Modes</th><th>Activation Reason</th></tr></thead>
                        <tbody><tr><td><ui-icon name="trigger"></ui-icon></td><td>Init</td><td></td><td>-</td></tr></tbody>
                    </table>
                    <scroll-bar thumb="76%"></scroll-bar>
                </div>
                <footer><push-button menu>New</push-button><push-button class="wide" disabled>Edit Mode Disabling...</push-button><push-button>Delete</push-button></footer>
            </div>`;
    }
}
customElements.define('trigger-panel', TriggerPanel);

class LogPanel extends BaseElement {
    css() {
        return `
            :host { flex: none; display: flex; flex-direction: column; background: #f6f6f6; border: 2px solid #cfcfcf; padding: 0 1px; }
            h2 { margin: 0; font-size: 20px; font-weight: 400; }
            header { display: flex; align-items: center; justify-content: space-between; height: 54px; padding: 0 14px 0 15px; }
            .box { border: 2px solid #cfcfcf; background: #f0f0f0; padding-bottom: 3px; }
            .view { display: flex; height: 82px; }
            .lines { flex: 1; min-width: 0; overflow: hidden; background: #fff; color: #111; white-space: nowrap; padding: 1px 0 0 2px; }
            mark { background: #0078d7; color: #fff; }
            .bottom { margin-right: 26px; }
            nav { display: flex; padding: 3px 0; }
            nav button { gap: 5px; height: 38px; padding: 0 15px; border-right: 1px solid #cfcfcf; }
            nav .active { color: #1b4a96; padding-left: 18px; }
        `;
    }
    html() {
        const root = '(C:¥Vector¥CBD1900611_D01_IMX8¥';
        const rest = '¥SipAddon¥StartApplication¥Config¥Developer¥';
        const line = (file, target, app = 'Applications') => `<div>07 Nov 2019 16:49:06 - Loading file ${file} ${root}${app}${rest}${target}</div>`;
        return `<header><h2>Action Log</h2><button aria-label="Auto hide"><ui-icon name="pin" size="20"></ui-icon></button></header>
            <div class="box">
                <div class="view">
                    <div class="lines">
                        ${line('IpcCdd_Client.arxml', 'ComponentTypes¥IpcCdd_Client.arxml)', '<mark>Application</mark>s')}
                        ${line('VideoCdd.arxml', 'ComponentTypes¥VideoCdd.arxml)')}
                        ${line('DataTypes.arxml', 'DataTypes.arxml)')}
                        ${line('CBD1900611.arxml', 'ECUProjects¥CBD1900611.arxml)')}
                    </div>
                    <scroll-bar vertical start="15%" thumb="80%"></scroll-bar>
                </div>
                <scroll-bar class="bottom" thumb="90%"></scroll-bar>
            </div>
            <nav>
                <button class="active"><ui-icon name="logSmall"></ui-icon>Action Log</button>
                <button><ui-icon name="messages"></ui-icon>Messages</button>
                <button><ui-icon name="binocularsSmall"></ui-icon>Find Results</button>
                <button><ui-icon name="diff"></ui-icon>Differences</button>
            </nav>`;
    }
}
customElements.define('log-panel', LogPanel);

class PropertiesPanel extends BaseElement {
    css() {
        return `
            :host { flex: 1; display: flex; flex-direction: column; margin-bottom: 3px; background: #f6f6f6; border: 2px solid #cfcfcf; padding: 0 1px; }
            header { display: flex; align-items: center; height: 54px; padding: 0 12px 0 15px; }
            h2 { margin: 0 auto 0 0; font-size: 20px; font-weight: 400; }
            header button { margin-left: 8px; color: #666; }
            .tools { display: flex; align-items: center; gap: 1px; height: 44px; padding: 0 7px 0 1px; }
            .tools > button { width: 39px; height: 38px; }
            .tools > .on { background: #b1d6f0; }
            .tools > i { width: 1px; height: 28px; margin: 0 2px 0 4px; background: #c6c6c6; }
            .filter { flex: 1; display: flex; height: 32px; margin-left: 6px; border: 2px solid #ababab; background: #fff; }
            input { flex: 1; min-width: 0; border: 0; padding: 0 6px; font: inherit; font-size: 16px; background: none; }
            input::placeholder { color: #999; }
            .filter button { width: 25px; border-left: 2px solid #ababab; background: #f3f3f3; }
            .grid { flex: 0 1 585px; background: #a0a0a0; border: 1px solid #bbb; border-top: 3px solid #c2c2c2; border-bottom: 2px solid #c6c6c6; }
            table { width: 100%; table-layout: fixed; border-collapse: collapse; background: #fff; font-size: 16px; color: #111; }
            .cat th { height: 28px; padding: 0 8px 0 29px; background: #dadada; text-align: left; color: #1b4788; font-size: 17px; }
            .cat .row { justify-content: space-between; }
            .cat i { border: 5px solid transparent; border-bottom-color: #666; border-top: 0; }
            tr > :first-child { background: #dadada; }
            td, .name { height: 27px; padding: 0 5px; border-top: 2px solid #e3e3e3; }
            .name { background: #f0f0f0; font-weight: 400; text-align: left; padding-left: 26px; border-right: 2px solid #dedede; }
            .muted { color: #555; height: 30px; }
            .value { font-size: 18px; }
        `;
    }
    html() {
        const button = (name, label, on) => `<button class="${on ? 'on' : ''}" aria-label="${label}"><ui-icon name="${name}" size="26"></ui-icon></button>`;
        const category = (name) => `<tr class="cat"><th colspan="3"><div class="row">${name}<i></i></div></th></tr>`;
        const row = (name, value, cls = '') => `<tr><td></td><th class="name ${cls}">${name}</th><td class="value">${value}</td></tr>`;
        return `<header><h2>Properties</h2><button aria-label="Auto hide"><ui-icon name="pin" size="20"></ui-icon></button><button aria-label="Close"><ui-icon name="close" size="20"></ui-icon></button></header>
            <div class="tools">
                ${button('categorize', 'Categorized', true)}${button('sortAz', 'Alphabetical')}${button('gridGray', 'Definition')}<i></i>${button('description', 'Description', true)}
                <div class="filter"><input aria-label="Filter" placeholder="&lt;Filter&gt;"><button aria-label="Search"><ui-icon name="search" size="20"></ui-icon></button><button aria-label="Filter history"><ui-icon name="chevronDown" size="20"></ui-icon></button></div>
            </div>
            <div class="grid"><table>
                <colgroup><col style="width:24px"><col style="width:46%"><col></colgroup>
                ${category('Complex Device Driver Component Type')}
                ${row('Name', 'VideoCdd')}
                ${row('Package', '/ComponentTypes')}
                ${category('Port Prototypes')}
                ${row('Port Prototype[...]', '', 'muted')}
            </table></div>`;
    }
}
customElements.define('properties-panel', PropertiesPanel);

class StatusBar extends BaseElement {
    css() {
        return `:host { display: flex; align-items: center; flex: none; height: 42px; padding: 0 10px; background: #1b4788; color: #fff; font-size: 17px; }`;
    }
}
customElements.define('status-bar', StatusBar);

class TaskButton extends BaseElement {
    css() {
        return `
            :host { display: block; flex: 0 0 68px; }
            :host([active]) { background: #4c4c4c; }
            button { position: relative; width: 100%; height: 100%; }
            i { position: absolute; left: 6px; right: 6px; bottom: 0; height: 4px; background: #76b9ed; }
            :host([active]) i { left: 0; right: 0; }
            :host([stacked]) i { border-right: 13px solid #5485ac; }
        `;
    }
    html() {
        const closed = this.hasAttribute('closed');
        return `<button aria-label="${this.getAttribute('label')}"><ui-icon name="${this.getAttribute('icon')}" size="36"></ui-icon>${closed ? '' : '<i></i>'}</button>`;
    }
}
customElements.define('task-button', TaskButton);

class TaskBar extends BaseElement {
    css() {
        return `
            :host { position: relative; display: flex; flex: none; height: 62px; background: #1e1e1e; color: #fff; }
            .start, .view { width: 72px; }
            label { flex: 0 1 522px; display: flex; align-items: center; gap: 16px; padding-left: 17px; background: #f2f2f2; }
            input { flex: 1; min-width: 0; border: 0; background: none; padding: 0; font-family: "Noto Sans CJK JP", sans-serif; font-size: 19px; }
            input::placeholder { color: #444; opacity: 1; }
            .apps { display: flex; gap: 2px; margin-left: 4px; }
            .tray { display: flex; align-items: center; margin-left: auto; margin-right: 6px; padding-right: 30px; gap: 12px; border-right: 1px solid #666; font-family: "Noto Sans CJK SC", sans-serif; }
            .ime { font-size: 24px; }
            .mode { width: 22px; height: 22px; background: #fff; color: #111; font-size: 19px; line-height: 21px; margin: 0 8px 0 10px; display: flex; justify-content: center; }
            .clock { font-family: "Open Sans", sans-serif; font-size: 16px; line-height: 28px; text-align: center; margin: 0 16px 0 4px; }
            .bell { position: relative; }
            .bell b { position: absolute; left: 10px; top: 11px; width: 26px; height: 26px; border: 2px solid #888; border-radius: 50%; background: #333; font: 15px/22px "Open Sans", sans-serif; }
            .mark { position: absolute; right: 17px; bottom: 6px; font: 17px/24px "Noto Sans CJK SC", sans-serif; color: #fff; opacity: .6; }
        `;
    }
    html() {
        const apps = [
            ['explorer', 'File Explorer', 'stacked'], ['ie', 'Internet Explorer', 'closed'], ['outlook', 'Outlook', 'stacked'],
            ['skype', 'Skype', ''], ['excel', 'Excel', 'stacked'], ['notepad', 'Notepad', 'stacked'], ['gRed', 'Editor', ''],
            ['vscode', 'Visual Studio Code', ''], ['acrobat', 'Acrobat', 'stacked'], ['putty', 'PuTTY', ''], ['lock', 'WinSCP', ''],
            ['word', 'Word', 'stacked'], ['chrome', 'Chrome', ''], ['devCoin', 'DaVinci Developer', 'active']
        ];
        return `<button class="start" aria-label="Start"><ui-icon name="windows" size="28"></ui-icon></button>
            <label><ui-icon name="searchBig" size="28"></ui-icon><input placeholder="ここに入力して検索" aria-label="ここに入力して検索"></label>
            <button class="view" aria-label="Task view"><ui-icon name="taskView" size="28"></ui-icon></button>
            <div class="apps">${apps.map(([icon, label, state]) => `<task-button icon="${icon}" label="${label}" ${state}></task-button>`).join('')}</div>
            <div class="tray">
                <ui-icon name="trayUp" size="22"></ui-icon><ui-icon name="battery" size="26"></ui-icon><ui-icon name="wifi" size="22"></ui-icon><ui-icon name="sound" size="26"></ui-icon>
                <span class="ime">英</span><span class="mode">拼</span>
                <div class="clock">18:18<br>2019/11/07</div>
                <button class="bell" aria-label="Notifications"><ui-icon name="notification" size="26"></ui-icon><b>15</b></button>
            </div>
            <span class="mark">CSDN @旅之灵夫</span>`;
    }
}
customElements.define('task-bar', TaskBar);
</script>
</body>
</html>
